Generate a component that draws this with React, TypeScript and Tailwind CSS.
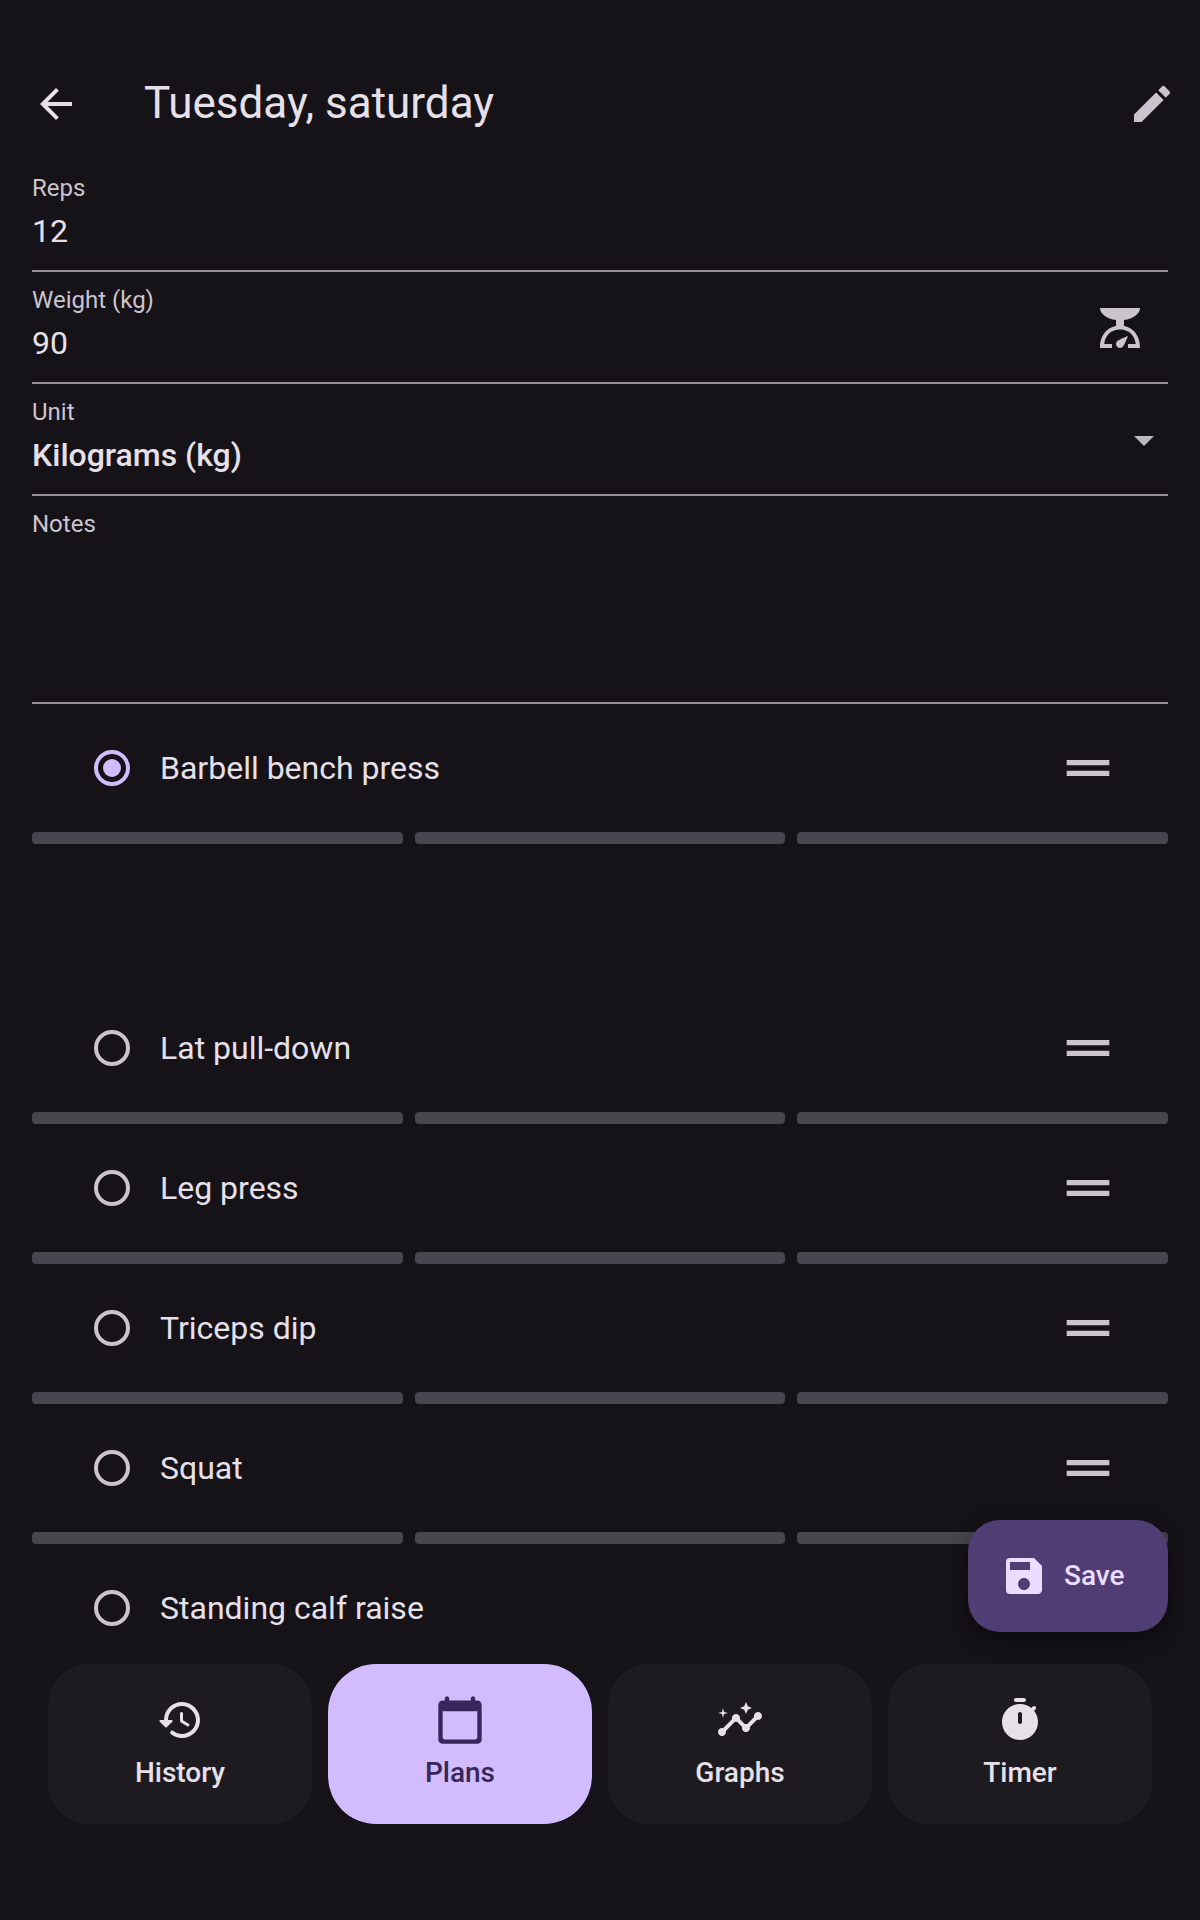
import { useState } from "react";
import type { ReactNode } from "react";
import {
  MdArrowBack,
  MdArrowDropDown,
  MdDragHandle,
  MdEdit,
  MdInsights,
  MdSave,
  MdScale,
} from "react-icons/md";

const exercises = [
  "Barbell bench press",
  "Lat pull-down",
  "Leg press",
  "Triceps dip",
  "Squat",
  "Standing calf raise",
];

const labelClass = "block text-2xl leading-8 text-[#cbc4cf]";
const inputClass =
  "mt-2 block w-full appearance-none bg-transparent p-0 text-[32px] leading-[38px] text-[#e7e0e8] outline-none";

function RoundedIcon({ d, className }: { d: string; className: string }) {
  return (
    <svg viewBox="0 0 24 24" fill="currentColor" className={className} aria-hidden="true">
      <path fillRule="evenodd" d={d} />
    </svg>
  );
}

function Field({
  id,
  label,
  children,
  action,
}: {
  id: string;
  label: string;
  children: ReactNode;
  action?: ReactNode;
}) {
  return (
    <div className="relative flex items-center border-b-2 border-[#948f99]">
      <div className="flex-1 pt-3 pb-5">
        <label htmlFor={id} className={labelClass}>
          {label}
        </label>
        {children}
      </div>
      {action}
    </div>
  );
}

function ExerciseRow({
  name,
  selected,
  onSelect,
}: {
  name: string;
  selected: boolean;
  onSelect: () => void;
}) {
  return (
    <li className={selected ? "mb-[140px]" : ""}>
      <div className="flex h-32 items-center pr-12 pl-[62px]">
        <label className="flex flex-1 items-center gap-[30px] text-[32px] leading-10">
          <input
            type="radio"
            name="exercise"
            checked={selected}
            onChange={onSelect}
            className="grid size-9 shrink-0 appearance-none place-content-center rounded-full border-4 border-[#cbc4cf] checked:border-[#d2bcfd] checked:before:size-[18px] checked:before:rounded-full checked:before:bg-[#d2bcfd]"
          />
          {name}
        </label>
        <button type="button" aria-label={`Reorder ${name}`} className="text-[#cbc4cf]">
          <MdDragHandle className="size-16" />
        </button>
      </div>
      <div className="grid grid-cols-3 gap-3">
        <div className="h-3 rounded bg-[#49454e]" />
        <div className="h-3 rounded bg-[#49454e]" />
        <div className="h-3 rounded bg-[#49454e]" />
      </div>
    </li>
  );
}

function NavItem({
  label,
  active,
  children,
}: {
  label: string;
  active?: boolean;
  children: ReactNode;
}) {
  return (
    <a
      href="#"
      aria-current={active ? "page" : undefined}
      className={
        active
          ? "flex h-40 flex-1 flex-col items-center gap-2 rounded-[48px] bg-[#d2bcfd] pt-[30px] text-[#38265c]"
          : "flex h-40 flex-1 flex-col items-center gap-2 rounded-[40px] bg-[#1d1b20] pt-[30px] text-[#e7e0e8]"
      }
    >
      <span className="flex h-[52px] items-center">{children}</span>
      <span className="text-[28px] leading-[38px] font-medium">{label}</span>
    </a>
  );
}

export default function App() {
  const [selected, setSelected] = useState(exercises[0]);

  return (
    <div className="flex h-screen flex-col bg-[#151218] font-[Roboto,sans-serif] text-[#e7e0e8]">
      <header className="mt-12 flex h-28 shrink-0 items-center pr-6 pl-8">
        <button type="button" aria-label="Back">
          <MdArrowBack className="size-12" />
        </button>
        <h1 className="ml-16 flex-1 pb-0.5 text-[44px] leading-[56px]">Tuesday, saturday</h1>
        <button type="button" aria-label="Edit" className="text-[#cbc4cf]">
          <MdEdit className="size-12" />
        </button>
      </header>

      <main className="relative min-h-0 flex-1">
        <div className="h-full overflow-hidden px-8">
          <Field id="reps" label="Reps">
            <input id="reps" inputMode="numeric" defaultValue="12" className={inputClass} />
          </Field>
          <Field
            id="weight"
            label="Weight (kg)"
            action={
              <button
                type="button"
                aria-label="Use body weight"
                className="mr-6 pt-0.5 text-[#cbc4cf]"
              >
                <MdScale className="size-12" />
              </button>
            }
          >
            <input id="weight" inputMode="decimal" defaultValue="90" className={inputClass} />
          </Field>
          <Field
            id="unit"
            label="Unit"
            action={
              <span className="pointer-events-none absolute right-0 pt-0.5 text-[#bababb]">
                <MdArrowDropDown className="size-12" />
              </span>
            }
          >
            <select id="unit" defaultValue="kg" className={`${inputClass} font-medium`}>
              <option value="kg">Kilograms (kg)</option>
              <option value="lb">Pounds (lb)</option>
            </select>
          </Field>
          <div className="border-b-2 border-[#948f99] pt-3 pb-0.5">
            <label htmlFor="notes" className={labelClass}>
              Notes
            </label>
            <textarea id="notes" rows={4} className={`${inputClass} resize-none`} />
          </div>

          <ul>
            {exercises.map((name) => (
              <ExerciseRow
                key={name}
                name={name}
                selected={name === selected}
                onSelect={() => setSelected(name)}
              />
            ))}
          </ul>
        </div>

        <button
          type="button"
          className="absolute right-8 bottom-8 flex h-28 min-w-[200px] items-center gap-4 rounded-[32px] bg-[#4f3d74] pr-8 pl-8 text-[28px] font-medium text-[#ebddff] shadow-[0_6px_20px_rgba(0,0,0,0.45)]"
        >
          <MdSave className="size-12" />
          Save
        </button>
      </main>

      <nav className="mb-24 flex shrink-0 gap-4 px-12">
        <NavItem label="History">
          <RoundedIcon
            className="size-12"
            d="M13.26 3C8.17 2.86 4 6.95 4 12H2.21c-.45 0-.67.54-.35.85l2.79 2.8c.2.2.51.2.71 0l2.79-2.8c.31-.31.09-.85-.36-.85H6c0-3.9 3.18-7.05 7.1-7 3.72.05 6.85 3.18 6.9 6.9.05 3.91-3.1 7.1-7 7.1-1.61 0-3.1-.55-4.28-1.48-.4-.31-.96-.28-1.32.08-.42.42-.39 1.13.08 1.49C9 20.29 10.91 21 13 21c5.05 0 9.14-4.17 9-9.26-.13-4.69-4.05-8.61-8.74-8.74zm-.51 5c-.41 0-.75.34-.75.75v3.68c0 .35.19.68.49.86l3.12 1.85c.36.21.82.09 1.03-.26.21-.36.09-.82-.26-1.03l-2.88-1.71v-3.4c0-.4-.34-.74-.75-.74z"
          />
        </NavItem>
        <NavItem label="Plans" active>
          <RoundedIcon
            className="size-[52px]"
            d="M20 3h-1V2c0-.55-.45-1-1-1s-1 .45-1 1v1H7V2c0-.55-.45-1-1-1s-1 .45-1 1v1H4c-1.1 0-2 .9-2 2v16c0 1.1.9 2 2 2h16c1.1 0 2-.9 2-2V5c0-1.1-.9-2-2-2zm-1 18H5c-.55 0-1-.45-1-1V8h16v12c0 .55-.45 1-1 1z"
          />
        </NavItem>
        <NavItem label="Graphs">
          <MdInsights className="size-12" />
        </NavItem>
        <NavItem label="Timer">
          <RoundedIcon
            className="size-12"
            d="M14 1h-4c-.55 0-1 .45-1 1s.45 1 1 1h4c.55 0 1-.45 1-1s-.45-1-1-1zm-2 13c.55 0 1-.45 1-1V9c0-.55-.45-1-1-1s-1 .45-1 1v4c0 .55.45 1 1 1zm7.03-6.61l.75-.75c.38-.38.39-1.01 0-1.4l-.01-.01c-.39-.39-1.01-.38-1.4 0l-.75.75C16.07 4.74 14.12 4 12 4c-4.8 0-8.88 3.96-9 8.76C2.87 17.84 6.94 22 12 22c4.98 0 9-4.03 9-9 0-2.12-.74-4.07-1.97-5.61z"
          />
        </NavItem>
      </nav>
    </div>
  );
}
